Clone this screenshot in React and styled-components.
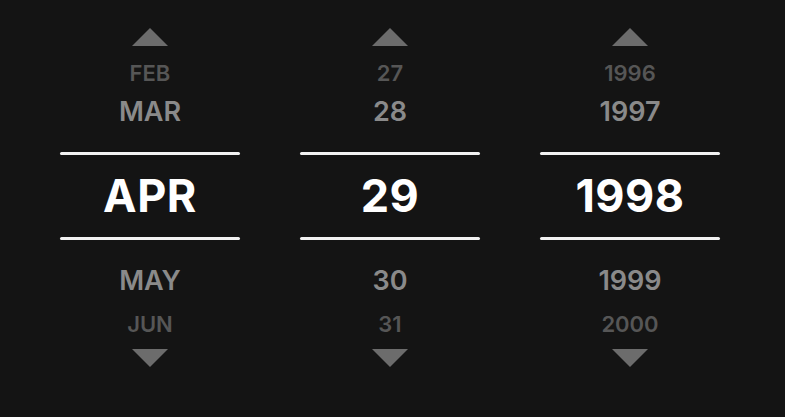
import React from 'react'
import styled, { createGlobalStyle } from 'styled-components'

const GlobalStyle = createGlobalStyle`
  html, body {
    margin: 0;
    padding: 0;
    background: #141414;
  }
  body {
    font-family: Inter, "Noto Sans", sans-serif;
  }
`

const Picker = styled.div`
  display: flex;
  gap: 60px;
  padding: 28px 0 0 60px;
  height: 417px;
  box-sizing: border-box;
`

const Wheel = styled.div`
  width: 180px;
  display: flex;
  flex-direction: column;
  align-items: center;
`

const Arrow = styled.div`
  width: 0;
  height: 0;
  border-left: 18px solid transparent;
  border-right: 18px solid transparent;
  ${(p) => (p.$down ? 'border-top: 18px solid #6c6c6c;' : 'border-bottom: 18px solid #6c6c6c;')}
  margin-top: ${(p) => (p.$down ? '10px' : '0')};
  cursor: pointer;
`

const Item = styled.div`
  text-align: center;
  white-space: nowrap;
  font-weight: 600;
  ${(p) =>
    p.$level === 2
      ? `font-size: 22px; line-height: 30px; color: #565656;`
      : `font-size: 27px; line-height: 34px; color: #8a8a8a;`}
  margin-top: ${(p) => p.$mt}px;
`

const Divider = styled.div`
  width: 180px;
  height: 3px;
  border-radius: 2px;
  background: #f2f2f2;
  margin-top: ${(p) => p.$mt || 0}px;
`

const Selected = styled.div`
  font-size: 45px;
  line-height: 82px;
  font-weight: 700;
  color: #ffffff;
  text-align: center;
  letter-spacing: 0.5px;
`

const wheels = [
  { key: 'month', values: ['FEB', 'MAR', 'APR', 'MAY', 'JUN'] },
  { key: 'day', values: ['27', '28', '29', '30', '31'] },
  { key: 'year', values: ['1996', '1997', '1998', '1999', '2000'] },
]

function DateWheel({ values }) {
  const [a, b, c, d, e] = values
  return (
    <Wheel>
      <Arrow />
      <Item $level={2} $mt={12}>{a}</Item>
      <Item $level={1} $mt={7}>{b}</Item>
      <Divider $mt={23} />
      <Selected>{c}</Selected>
      <Divider />
      <Item $level={1} $mt={24}>{d}</Item>
      <Item $level={2} $mt={11}>{e}</Item>
      <Arrow $down />
    </Wheel>
  )
}

export default function App() {
  return (
    <>
      <GlobalStyle />
      <Picker>
        {wheels.map((w) => (
          <DateWheel key={w.key} values={w.values} />
        ))}
      </Picker>
    </>
  )
}
